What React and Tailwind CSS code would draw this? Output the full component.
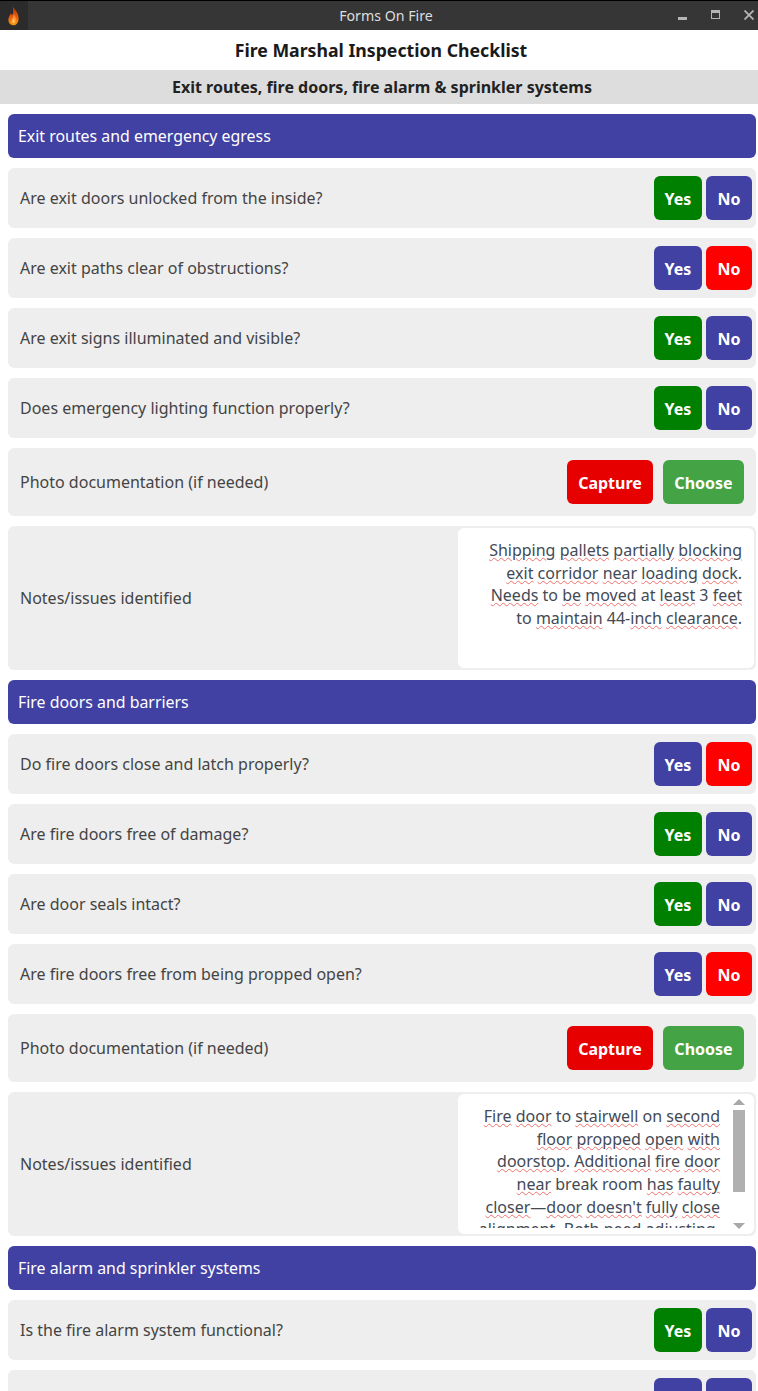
function Flame() {
  return (
    <svg width="11" height="20" viewBox="0 0 12 21" className="mr-[2px]">
      <defs>
        <linearGradient id="flame" x1="0" y1="0" x2="0" y2="1">
          <stop offset="0" stopColor="#a8320a" />
          <stop offset="0.55" stopColor="#ea580c" />
          <stop offset="1" stopColor="#f59e0b" />
        </linearGradient>
      </defs>
      <path d="M5 0C7 3 11 6 11.500 12c.5 5-2 8.500-5.500 8.500C2.500 20.500 0 18 0.500 13.500 1 11 2.500 9.500 3 7.500 4.500 9 4.500 10 4.500 10 6 7 6 3 5 0Z" fill="url(#flame)" />
      <path d="M6.500 8c1 3 3 5 2.500 9C8.500 19.500 4 19.500 3.500 17 3.300 14.500 6 12 6.500 8Z" fill="#fb923c" />
      <path d="M6 13c.5 1.500 1.500 2.500 1.200 4C7 18.500 5 18.500 4.800 17 4.700 16 5.800 14.500 6 13Z" fill="#fcd34d" />
    </svg>
  );
}

function TitleBar() {
  return (
    <div className="flex h-[30px] items-center border-t border-black bg-[#363636] text-[#dedede]">
      <div className="flex h-full w-7 items-center justify-center bg-[#2b2b2b]">
        <Flame />
      </div>
      <div className="flex-1 pl-[66px] text-center text-[14.200px]">Forms On Fire</div>
      <div className="flex h-full items-start">
        <div className="mt-[16px] h-[3px] w-[9px] bg-[#b5b5b5]" />
        <div className="ml-[24px] mt-[9px] h-[9px] w-[9px] border border-t-[3px] border-[#b5b5b5]" />
        <svg className="ml-[24px] mr-[4px] mt-[9px]" width="10" height="10" viewBox="0 0 10 10">
          <path d="M0.500 0.500L9.500 9.500M9.500 0.500L0.500 9.500" stroke="#b5b5b5" strokeWidth="1.800" />
        </svg>
      </div>
    </div>
  );
}

function SectionHeader({ title }) {
  return (
    <div className="ml-2 mr-[2px] flex h-11 items-center rounded-md bg-[#4140a3] px-[10px] pt-px text-[15.900px] text-white">
      {title}
    </div>
  );
}

function YesNo({ answer }) {
  return (
    <div className="flex gap-1 font-bold text-white">
      <div className={`flex h-11 w-12 items-center justify-center rounded-md pt-px ${answer === "yes" ? "bg-[#008000]" : "bg-[#4140a3]"}`}>
        Yes
      </div>
      <div className={`flex h-11 w-[46px] items-center justify-center rounded-md pt-px ${answer === "no" ? "bg-[#ff0000]" : "bg-[#4140a3]"}`}>
        No
      </div>
    </div>
  );
}

function QuestionRow({ label, answer }) {
  return (
    <div className="ml-2 mr-[2px] flex h-[60px] items-center justify-between rounded-md bg-[#eeeeee] pl-3 pr-1">
      <span>{label}</span>
      <YesNo answer={answer} />
    </div>
  );
}

function PhotoRow() {
  return (
    <div className="ml-2 mr-[2px] flex h-[68px] items-center justify-between rounded-md bg-[#eeeeee] pl-3 pr-3">
      <span>Photo documentation (if needed)</span>
      <div className="flex gap-[10px] font-bold text-white">
        <div className="flex h-11 w-[86px] items-center justify-center rounded-md bg-[#e60000] pt-px">Capture</div>
        <div className="flex h-11 w-[81px] items-center justify-center rounded-md bg-[#43a345] pt-px">Choose</div>
      </div>
    </div>
  );
}

// words the spell checker flags get a wavy underline
function Flagged({ children }) {
  return <span className="underline decoration-[#f0706c] decoration-wavy decoration-1 underline-offset-1">{children}</span>;
}

function NotesRow({ children, scroll }) {
  return (
    <div className="ml-2 mr-[2px] flex h-36 items-stretch justify-between rounded-md bg-[#eeeeee] py-[2px] pl-3 pr-[2px]">
      <span className="self-center">Notes/issues identified</span>
      <div className="flex w-[296px] overflow-hidden rounded-md bg-white">
        <div className={`mb-[6px] flex-1 overflow-hidden pl-4 pt-[11px] text-right leading-[22.670px] text-[#444a55] ${scroll ? "pr-[13px]" : "pr-3"}`}>
          {children}
        </div>
        {scroll && (
          <div className="mr-[9px] flex w-3 flex-col items-center pt-[5px]">
            <div className="h-0 w-0 border-x-[6px] border-b-[6px] border-x-transparent border-b-[#a8a8a8]" />
            <div className="mt-[5px] h-[82px] w-3 bg-[#b0b0b0]" />
            <div className="mt-[31px] h-0 w-0 border-x-[6px] border-t-[6px] border-x-transparent border-t-[#a8a8a8]" />
          </div>
        )}
      </div>
    </div>
  );
}

export default function App() {
  return (
    <div
      className="h-[1391px] overflow-hidden bg-white text-[16px] text-[#444444]"
      style={{ fontFamily: '"Noto Sans", "Open Sans", sans-serif' }}
    >
      <TitleBar />
      <div className="flex h-10 items-center justify-center pl-1 text-[17.700px] font-bold text-[#1a1a1a]">
        Fire Marshal Inspection Checklist
      </div>
      <div className="flex h-[34px] items-center justify-center bg-[#dddddd] pl-[6px] font-bold text-[#222222]">
        Exit routes, fire doors, fire alarm &amp; sprinkler systems
      </div>
      <div className="flex flex-col gap-[10px] pt-[10px]">
        <SectionHeader title="Exit routes and emergency egress" />
        <QuestionRow label="Are exit doors unlocked from the inside?" answer="yes" />
        <QuestionRow label="Are exit paths clear of obstructions?" answer="no" />
        <QuestionRow label="Are exit signs illuminated and visible?" answer="yes" />
        <QuestionRow label="Does emergency lighting function properly?" answer="yes" />
        <PhotoRow />
        <NotesRow>
          <Flagged>Shipping</Flagged> <Flagged>pallets</Flagged> <Flagged>partially</Flagged> <Flagged>blocking</Flagged>{" "}
          <Flagged>exit</Flagged> <Flagged>corridor</Flagged> <Flagged>near</Flagged> <Flagged>loading</Flagged> <Flagged>dock</Flagged>.{" "}
          <Flagged>Needs</Flagged> to <Flagged>be</Flagged> <Flagged>moved</Flagged> at <Flagged>least</Flagged> 3 <Flagged>feet</Flagged>{" "}
          to <Flagged>maintain</Flagged> 44-<Flagged>inch</Flagged> <Flagged>clearance</Flagged>.
        </NotesRow>

        <SectionHeader title="Fire doors and barriers" />
        <QuestionRow label="Do fire doors close and latch properly?" answer="no" />
        <QuestionRow label="Are fire doors free of damage?" answer="yes" />
        <QuestionRow label="Are door seals intact?" answer="yes" />
        <QuestionRow label="Are fire doors free from being propped open?" answer="no" />
        <PhotoRow />
        <NotesRow scroll>
          <Flagged>Fire</Flagged> <Flagged>door</Flagged> to <Flagged>stairwell</Flagged> on <Flagged>second</Flagged>{" "}
          <Flagged>floor</Flagged> <Flagged>propped</Flagged> <Flagged>open</Flagged> <Flagged>with</Flagged>{" "}
          <Flagged>doorstop</Flagged>. <Flagged>Additional</Flagged> <Flagged>fire</Flagged> <Flagged>door</Flagged>{" "}
          <Flagged>near</Flagged> break room <Flagged>has</Flagged> <Flagged>faulty</Flagged>{" "}
          <Flagged>closer</Flagged>—<Flagged>door</Flagged> <Flagged>doesn't</Flagged> <Flagged>fully</Flagged> <Flagged>close</Flagged>{" "}
          <Flagged>alignment</Flagged>. Both <Flagged>need</Flagged> adjusting.
        </NotesRow>

        <SectionHeader title="Fire alarm and sprinkler systems" />
        <QuestionRow label="Is the fire alarm system functional?" answer="yes" />
        <QuestionRow label="" answer="none" />
      </div>
    </div>
  );
}
